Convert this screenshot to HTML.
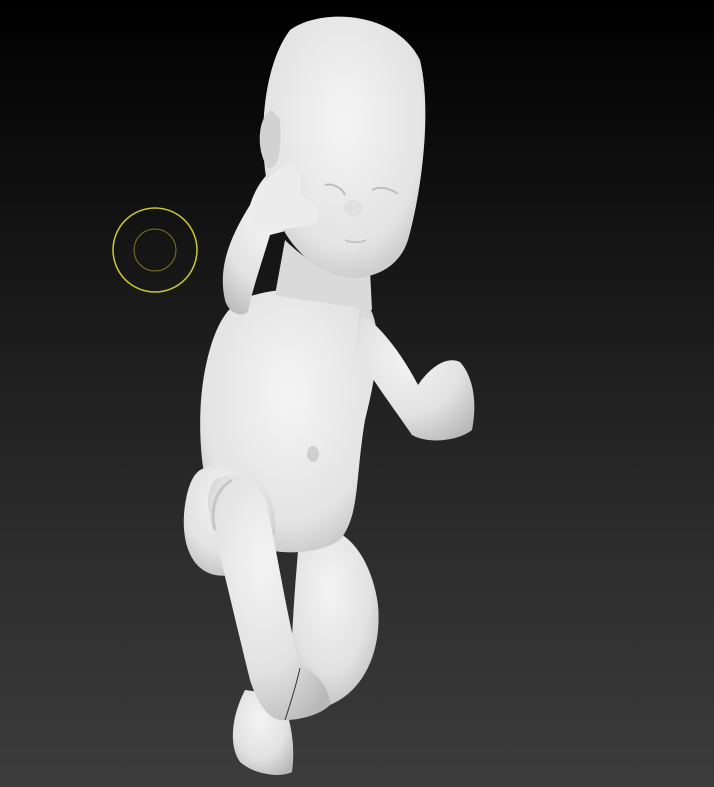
<!DOCTYPE html>
<html><head><style>
html,body{margin:0;padding:0;width:714px;height:787px;overflow:hidden;background:linear-gradient(#000 0%,#141414 30%,#2a2a2a 65%,#3c3c3c 100%);}
svg{position:absolute;left:0;top:0}
</style></head><body>
<svg width="714" height="787" viewBox="0 0 714 787">
<defs>
<radialGradient id="g" cx="0.45" cy="0.35" r="0.75">
<stop offset="0" stop-color="#f4f4f4"/><stop offset="0.6" stop-color="#e2e2e2"/><stop offset="1" stop-color="#b8b8b8"/>
</radialGradient>
<radialGradient id="h" cx="0.5" cy="0.4" r="0.7">
<stop offset="0" stop-color="#f5f5f5"/><stop offset="0.7" stop-color="#e3e3e3"/><stop offset="1" stop-color="#bcbcbc"/>
</radialGradient>
</defs>
<!-- bottom foot -->
<path d="M245 690 C232 715 228 745 240 762 C255 775 280 778 292 772 C296 745 290 715 280 695 Z" fill="url(#g)"/>
<!-- right leg -->
<path d="M300 530 C345 515 372 560 378 605 C382 650 365 690 330 705 C305 712 290 700 290 680 C292 630 295 580 300 530 Z" fill="url(#g)"/>
<!-- torso -->
<path d="M240 300 C275 285 330 285 368 305 C385 330 375 380 365 420 C355 480 360 515 340 540 C310 560 250 555 225 530 C200 500 195 420 205 370 C212 335 222 312 240 300 Z" fill="url(#h)"/>
<!-- left thigh -->
<path d="M200 470 C230 455 270 470 275 520 C278 560 250 580 215 575 C190 570 180 540 185 505 C188 485 193 475 200 470 Z" fill="url(#g)"/>
<!-- left lower leg + foot -->
<path d="M215 480 C235 468 262 480 268 510 C280 570 290 630 300 665 C318 672 330 690 330 705 C320 715 300 720 285 720 C270 722 258 705 250 680 C235 620 222 560 210 520 C206 500 208 488 215 480 Z" fill="url(#g)"/>
<!-- right arm -->
<path d="M360 312 C385 330 405 360 418 385 C428 370 445 355 460 362 C472 375 478 400 472 430 C460 440 430 445 412 435 C395 410 372 380 355 350 Z" fill="url(#g)"/>
<!-- raised arm -->
<path d="M225 300 C218 270 228 240 250 205 C258 180 275 160 295 165 C308 175 318 200 320 215 C310 225 290 230 270 235 C262 262 252 290 248 312 C240 318 228 312 225 300 Z" fill="url(#g)"/>
<!-- neck -->
<path d="M285 240 C310 265 340 280 370 270 L372 310 C340 305 300 300 275 295 Z" fill="#dadada"/>
<!-- head -->
<path d="M290 30 C320 8 395 10 420 60 C432 110 422 190 408 240 C398 272 365 282 340 276 C305 266 282 238 270 198 C258 150 260 70 290 30 Z" fill="url(#h)"/>
<!-- ear -->
<path d="M272 110 C258 115 255 150 268 168 C278 170 282 150 280 120 Z" fill="#d2d2d2"/>
<!-- hand on face -->
<path d="M252 215 C255 190 272 168 290 165 C300 170 302 180 300 195 C312 200 322 210 318 222 C305 228 285 228 268 232 C258 232 252 225 252 215 Z" fill="#ececec"/>
<!-- details -->
<ellipse cx="313" cy="454" rx="6" ry="8" fill="#cfcfcf"/>
<path d="M325 185 C333 183 342 188 345 195" stroke="#bdbdbd" stroke-width="2" fill="none"/>
<path d="M372 190 C380 186 390 188 398 194" stroke="#bdbdbd" stroke-width="2" fill="none"/>
<ellipse cx="353" cy="208" rx="9" ry="8" fill="#e0e0e0"/>
<path d="M345 240 C352 243 360 243 366 240" stroke="#c4c4c4" stroke-width="2" fill="none"/>
<path d="M232 480 C215 490 210 510 215 530" stroke="#c6c6c6" stroke-width="3" fill="none"/>
<path d="M300 668 C295 690 290 705 285 720" stroke="#333" stroke-width="1" fill="none"/>
<!-- brush cursor -->
<circle cx="155" cy="250" r="42" fill="none" stroke="#c9c832" stroke-width="1.5"/>
<circle cx="155" cy="250" r="21" fill="none" stroke="#7a7a20" stroke-width="1"/>
</svg>
</body></html>
